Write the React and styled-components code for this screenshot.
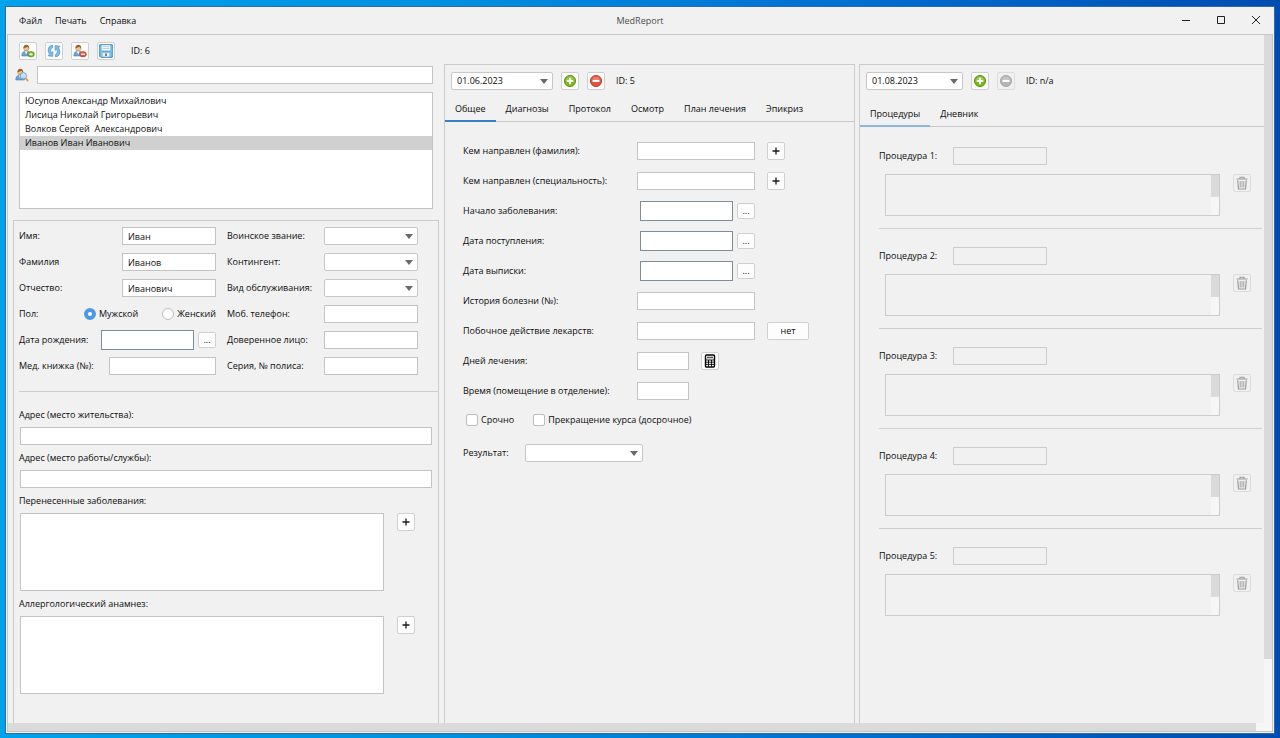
import React, { useId, useState } from 'react';
import styled, { createGlobalStyle } from 'styled-components';

const GlobalStyle = createGlobalStyle`
  * {
    box-sizing: border-box;
  }
  body {
    margin: 0;
    background-color: #0078d7;
  }
  body, input, button, select, textarea {
    font-family: 'Open Sans', 'Noto Sans', sans-serif;
    font-size: 9px;
    line-height: 14px;
    color: #0c0c0c;
  }
`

const Desktop = styled.div`
  min-height: 100vh;
  padding: 6px 5px 4px;
  display: flex;
  background: linear-gradient(90deg, #00a2ec 0%, #0090e0 35%, #0070d4 65%, #004cb0 100%);
`

const Window = styled.div`
  flex: 1;
  min-width: 0;
  display: flex;
  flex-direction: column;
  padding: 0 1px 1px;
  border: 1px solid #2d6c9c;
  background-color: #f1f1f1;
`

const TitleBar = styled.header`
  height: 27px;
  display: grid;
  grid-template-columns: 1fr auto 1fr;
  align-items: center;
`

const Menu = styled.nav`
  display: flex;
  gap: 13px;
  padding-left: 12px;
`

const MenuItem = styled.button`
  padding: 0;
  border: none;
  background: none;
`

const Title = styled.h1`
  margin: 0;
  font-size: 9px;
  font-weight: 400;
  color: #4c4c4c;
`

const WindowControls = styled.div`
  display: flex;
  justify-content: flex-end;
  gap: 23px;
  padding-right: 11px;
`

const WindowControl = styled.button`
  width: 12px;
  height: 12px;
  padding: 0;
  border: none;
  background: none;
  display: flex;
  align-items: center;
  justify-content: center;
`

const Frame = styled.div`
  flex: 1;
  display: grid;
  grid-template-columns: 1fr 8px;
  grid-template-rows: 1fr 8px;
  border: 1px solid #c6c6c6;
`

const Columns = styled.main`
  display: grid;
  grid-template-columns: 432fr 411fr 405fr;
  gap: 4px;
`

const ScrollTrack = styled.div`
  display: flex;
  flex-direction: ${props => props.$horizontal ? 'row' : 'column'};
  background-color: #f6f6f6;
`

const ScrollThumb = styled.div`
  flex-basis: ${props => props.$size};
  background-color: #dadada;
`

const PatientColumn = styled.section`
  min-width: 0;
  display: flex;
  flex-direction: column;
  padding: 7px 1px 0 5px;
`

const PatientTools = styled.div`
  display: flex;
  align-items: center;
  gap: 8px;
  padding-left: 6px;
`

const IdText = styled.span`
  padding-left: ${props => props.$wide ? '8px' : '3px'};
`

const SearchRow = styled.div`
  display: flex;
  align-items: center;
  gap: 8px;
  padding: 6px 6px 8px 2px;
  svg {
    flex: none;
  }
`

const IconButton = styled.button`
  flex: none;
  width: ${props => props.$wide ? '42px' : '18px'};
  height: 18px;
  padding: 0;
  display: flex;
  align-items: center;
  justify-content: center;
  border: 1px solid ${props => props.disabled ? '#dcdcdc' : '#d0d0d0'};
  border-radius: 2px;
  background-color: ${props => props.disabled ? '#f1f1f1' : '#fdfdfd'};
`

const TextInput = styled.input`
  width: ${props => props.$width || '100%'};
  height: ${props => props.$date ? '20px' : '18px'};
  padding: 0 5px;
  border: 1px solid ${props => props.$date ? '#7f8c99' : '#c4c4c4'};
  border-radius: 0;
  background-color: white;
  &:disabled {
    background-color: #f1f1f1;
    border-color: #cccccc;
  }
`

const PatientList = styled.ul`
  height: 117px;
  margin: 0 6px 11px;
  padding: 1px 0;
  list-style: none;
  border: 1px solid #c4c4c4;
  background-color: white;
`

const PatientItem = styled.li`
  height: 14px;
  padding-left: 5px;
  white-space: pre;
  background-color: ${props => props.$selected ? '#d0d0d0' : 'white'};
`

const PatientCard = styled.div`
  flex: 1;
  padding-top: 6px;
  border: 1px solid #cbcbcb;
  border-bottom: none;
`

const PatientGrid = styled.div`
  display: grid;
  grid-template-columns: 197fr 191fr;
  grid-auto-rows: 18px;
  gap: 8px 11px;
  padding: 0 20px 16px 5px;
`

const FieldRow = styled.div`
  min-width: 0;
  display: flex;
  align-items: center;
  justify-content: space-between;
  white-space: nowrap;
`

const DateGroup = styled.div`
  display: flex;
  align-items: center;
  justify-content: flex-end;
  gap: 4px;
`

const MoreButton = styled(IconButton)`
  height: 16px;
`

const RadioGroup = styled.div`
  display: flex;
  gap: 24px;
`

const Choice = styled.label`
  display: flex;
  align-items: center;
  gap: 3px;
`

const Radio = styled.input`
  appearance: none;
  width: 12px;
  height: 12px;
  margin: 0;
  border: 1px solid #bdbdbd;
  border-radius: 50%;
  background-color: white;
  &:checked {
    border: 4px solid #4c9be2;
  }
`

const CheckBox = styled.input`
  appearance: none;
  width: 12px;
  height: 12px;
  margin: 0;
  border: 1px solid #bdbdbd;
  border-radius: 2px;
  background-color: white;
  &:checked {
    background-color: #4c9be2;
  }
`

const SelectBox = styled.div`
  flex: none;
  display: grid;
  align-items: center;
  width: ${props => props.$width};
  &::after {
    content: '';
    grid-area: 1 / 1;
    justify-self: end;
    margin-right: 5px;
    border: 4px solid transparent;
    border-top: 5px solid #6a6a6a;
    border-bottom: none;
    pointer-events: none;
  }
`

const NativeSelect = styled.select`
  appearance: none;
  grid-area: 1 / 1;
  width: 100%;
  height: 18px;
  padding: 0 5px;
  border: 1px solid #c8c8c8;
  border-radius: 2px;
  background-color: white;
`

const Divider = styled.hr`
  width: 100%;
  height: 1px;
  margin: 0;
  border: none;
  background-color: #cfcfcf;
`

const PatientDivider = styled.div`
  padding-left: 5px;
`

const PatientNotes = styled.div`
  display: flex;
  flex-direction: column;
  gap: 6px;
  padding: 16px 6px 0 5px;
`

const NoteBlock = styled.div`
  display: flex;
  flex-direction: column;
  gap: 5px;
`

const NoteBody = styled.div`
  display: flex;
  align-items: flex-start;
  gap: 13px;
  padding: ${props => props.$withButton ? '0 17px 0 1px' : '0 0 0 1px'};
`

const NoteArea = styled.textarea`
  flex: 1;
  min-width: 0;
  height: 78px;
  padding: 2px 5px;
  resize: none;
  border: 1px solid #c4c4c4;
  background-color: white;
`

const Panel = styled.section`
  min-width: 0;
  margin-top: 29px;
  border: 1px solid #cbcbcb;
  border-width: ${props => props.$open ? '1px 0 0 1px' : '1px 1px 0'};
`

const PanelTools = styled.div`
  display: flex;
  align-items: center;
  gap: 8px;
  padding: 7px 6px 0;
`

const TabList = styled.div`
  display: flex;
  margin-top: ${props => props.$spacing};
  box-shadow: inset 0 -1px #c8c8c8;
`

const Tab = styled.button`
  height: 24px;
  padding: 0 10px;
  border: none;
  border-bottom: 2px solid ${props => props.$active ? props.$accent : 'transparent'};
  background: none;
  white-space: nowrap;
`

const VisitForm = styled.form`
  padding: 14px 18px;
`

const VisitRow = styled.div`
  height: 30px;
  display: grid;
  grid-template-columns: 174px 118px auto;
  align-items: center;
  justify-content: start;
  white-space: nowrap;
`

const VisitAction = styled.div`
  display: flex;
  padding-left: 12px;
`

const ShortControl = styled.div`
  display: flex;
  gap: 12px;
`

const CheckRow = styled.div`
  height: 28px;
  display: flex;
  align-items: center;
  gap: 19px;
  padding-left: 3px;
`

const ResultRow = styled.div`
  height: 38px;
  display: flex;
  align-items: center;
  gap: 16px;
`

const Procedures = styled.div`
  padding: 2px 2px 0 19px;
`

const Procedure = styled.div`
  padding: 18px 0 12px;
`

const ProcedureHead = styled.div`
  display: grid;
  grid-template-columns: 74px 94px;
  align-items: center;
  margin-bottom: 9px;
`

const ProcedureBody = styled.div`
  display: flex;
  align-items: flex-start;
  gap: 13px;
  padding: 0 11px 0 6px;
`

const ProcedureNote = styled.div`
  flex: 1;
  height: 42px;
  display: flex;
  border: 1px solid #cccccc;
`

const ProcedureArea = styled.textarea`
  flex: 1;
  min-width: 0;
  padding: 2px 5px;
  resize: none;
  border: none;
  background-color: #f1f1f1;
`

const ProcedureTrack = styled(ScrollTrack)`
  width: 8px;
`

const Person = () => (
  <>
    <path d="M.8 12c0-2.800 1-4.300 2.800-4.800h3c1.800.5 2.800 2 2.800 4.800z" fill="#6aa5dc" stroke="#3a74ac" strokeWidth=".5" />
    <path d="M3.800 7.200h2.800l-1.400 3.300z" fill="#fff" />
    <circle cx="5.300" cy="4.300" r="2.600" fill="#f2c08a" stroke="#b07838" strokeWidth=".5" />
    <path d="M2.500 4.300c-.4-4.600 6.100-4.600 5.700 0-.9-.3-1.400-.9-1.700-1.500-1 .8-2.500.9-4 1.500z" fill="#97602c" />
  </>
)

const AddUserIcon = () => (
  <svg width="14" height="14" viewBox="0 0 14 14">
    <Person />
    <ellipse cx="10" cy="10.200" rx="3.400" ry="2.700" fill="#76b832" stroke="#4c8a1a" strokeWidth=".6" />
    <path d="M8.200 10.200h3.600M10 8.900v2.600" stroke="#fff" strokeWidth="1.100" />
  </svg>
)

const RemoveUserIcon = () => (
  <svg width="14" height="14" viewBox="0 0 14 14">
    <Person />
    <ellipse cx="10" cy="10.200" rx="3.400" ry="2.700" fill="#e4543f" stroke="#b83c2c" strokeWidth=".6" />
    <path d="M8 10.200h4" stroke="#fff" strokeWidth="1.300" />
  </svg>
)

const SearchUserIcon = () => (
  <svg width="14" height="14" viewBox="0 0 14 14">
    <Person />
    <path d="m10.700 10.500 2.500 2.500" stroke="#e2a23c" strokeWidth="1.800" />
    <circle cx="8.300" cy="7.800" r="3.200" fill="#c4e2f8" fillOpacity=".9" stroke="#7f9fbc" strokeWidth="1" />
  </svg>
)

const RefreshIcon = () => (
  <svg width="14" height="14" viewBox="0 0 14 14" fill="#7fbdea" stroke="#3d86c2" strokeWidth=".6" strokeLinejoin="round">
    <path d="M5.600 1.300C2.300 1.300.9 4 1.200 6.800c.1 1.400.6 2.500 1.300 3.400L1 11.800l4.800.6.1-4.800-1.500 1.200C3.200 7 3.400 4.400 5.600 3.600z" />
    <path d="M8.400 12.700c3.300 0 4.700-2.700 4.400-5.500-.1-1.400-.6-2.500-1.300-3.400L13 2.200l-4.800-.6-.1 4.800 1.500-1.200c1.200 1.800 1 4.400-1.200 5.200z" />
  </svg>
)

const SaveIcon = () => (
  <svg width="14" height="14" viewBox="0 0 14 14">
    <path d="M.7.7h12.600v12.600H1.700l-1-1z" fill="#7cc4f0" stroke="#2f80b8" strokeWidth=".9" />
    <path d="M2.800 1.200h8.400v5.600H2.800z" fill="#fbfdff" />
    <path d="M3.600 2.700h6.800M3.600 4.600h6.800" stroke="#9cb4c4" strokeWidth=".7" />
    <path d="M2.800 7.200h8.400" stroke="#3c8ec6" strokeWidth=".8" />
    <path d="M3.500 8.700h7v4.100h-7z" fill="#f0f4f6" stroke="#8fb0c6" strokeWidth=".4" />
    <path d="M6.300 9.500h1.400v2.500H6.300z" fill="#3a4a58" />
  </svg>
)

const RoundIcon = ({ fill, edge, plus }) => (
  <svg width="14" height="14" viewBox="0 0 14 14">
    <circle cx="7" cy="7" r="5.600" fill={fill} stroke={edge} strokeWidth=".9" />
    <path d="M3 5.800C4 1.700 10 1.700 11 5.800 9 6.800 5 6.800 3 5.800z" fill="#fff" opacity=".25" />
    <path d={plus ? 'M3.700 7h6.600M7 3.700v6.600' : 'M3.500 7h7'} stroke="#fff" strokeWidth="2" />
  </svg>
)

const PlusIcon = () => (
  <svg width="10" height="10" viewBox="0 0 10 10" stroke="#1a1a1a" strokeWidth="1.300">
    <path d="M1.500 5h7M5 1.500v7" />
  </svg>
)

const CalculatorIcon = () => (
  <svg width="12" height="14" viewBox="0 0 12 14">
    <rect x="1.500" y="1" width="9" height="12" rx="1" fill="#fff" stroke="#000" strokeWidth="1.400" />
    <path d="M3 3.500h6" stroke="#555" strokeWidth="1.600" />
    <path d="M2 6h8M2 8.200h8M2 10.400h8M4.500 6v6.500M7.500 6v6.500" stroke="#000" strokeWidth=".9" />
  </svg>
)

const TrashIcon = () => (
  <svg width="14" height="14" viewBox="0 0 14 14" fill="none" stroke="#9c9c9c">
    <path d="M1.500 3h11M5 2.700V1.300h4v1.400" strokeWidth="1.100" />
    <path d="M2.700 4.200 3.500 13h7l.8-8.800" strokeWidth="1.200" />
    <path d="M5.200 5v6.500M7 5v6.500M8.800 5v6.500" strokeWidth=".9" />
  </svg>
)

const Select = ({ id, width, options = [''], label }) => (
  <SelectBox $width={width}>
    <NativeSelect id={id} aria-label={label}>
      {options.map(option => <option key={option}>{option}</option>)}
    </NativeSelect>
  </SelectBox>
)

const DateField = ({ id }) => (
  <DateGroup>
    <TextInput id={id} $date $width="93px" />
    <MoreButton type="button" aria-label="Выбрать дату">...</MoreButton>
  </DateGroup>
)

const PatientField = ({ label, type, width = '94px', value }) => {
  const id = useId()
  return (
    <FieldRow>
      <label htmlFor={id}>{label}</label>
      {type === 'select' && <Select id={id} width={width} />}
      {type === 'date' && <DateField id={id} />}
      {!type && <TextInput id={id} $width={width} defaultValue={value} />}
    </FieldRow>
  )
}

const Note = ({ label, multiline }) => {
  const id = useId()
  return (
    <NoteBlock>
      <label htmlFor={id}>{label}</label>
      <NoteBody $withButton={multiline}>
        {multiline ? <NoteArea id={id} /> : <TextInput id={id} />}
        {multiline && <IconButton aria-label="Добавить"><PlusIcon /></IconButton>}
      </NoteBody>
    </NoteBlock>
  )
}

const VisitField = ({ label, type, action }) => {
  const id = useId()
  return (
    <VisitRow>
      <label htmlFor={id}>{label}</label>
      {type === 'date' && <DateField id={id} />}
      {type === 'short' && (
        <ShortControl>
          <TextInput id={id} $width="52px" />
          {action}
        </ShortControl>
      )}
      {!type && <TextInput id={id} />}
      {!type && action && <VisitAction>{action}</VisitAction>}
    </VisitRow>
  )
}

const ProcedureItem = ({ number }) => {
  const id = useId()
  return (
    <Procedure>
      <ProcedureHead>
        <label htmlFor={id}>Процедура {number}:</label>
        <TextInput id={id} disabled />
      </ProcedureHead>
      <ProcedureBody>
        <ProcedureNote>
          <ProcedureArea disabled aria-label={`Описание процедуры ${number}`} />
          <ProcedureTrack><ScrollThumb $size="22px" /></ProcedureTrack>
        </ProcedureNote>
        <IconButton disabled aria-label="Удалить"><TrashIcon /></IconButton>
      </ProcedureBody>
    </Procedure>
  )
}

const Tabs = ({ names, accent, spacing }) => {
  const [active, setActive] = useState(names[0])
  return (
    <TabList role="tablist" $spacing={spacing}>
      {names.map(name => (
        <Tab
          key={name}
          role="tab"
          aria-selected={name === active}
          $active={name === active}
          $accent={accent}
          onClick={() => setActive(name)}
        >
          {name}
        </Tab>
      ))}
    </TabList>
  )
}

const patients = [
  'Юсупов Александр Михайлович',
  'Лисица Николай Григорьевич',
  'Волков Сергей  Александрович',
  'Иванов Иван Иванович',
]

const visitTabs = ['Общее', 'Диагнозы', 'Протокол', 'Осмотр', 'План лечения', 'Эпикриз']

function App() {
  const [selected, setSelected] = useState(3)
  const addButton = <IconButton type="button" aria-label="Добавить"><PlusIcon /></IconButton>

  return (
    <Desktop>
      <GlobalStyle />
      <Window>
        <TitleBar>
          <Menu>
            <MenuItem>Файл</MenuItem>
            <MenuItem>Печать</MenuItem>
            <MenuItem>Справка</MenuItem>
          </Menu>
          <Title>MedReport</Title>
          <WindowControls>
            <WindowControl aria-label="Свернуть">
              <svg width="10" height="10" stroke="#222"><path d="M1 4.500h8" /></svg>
            </WindowControl>
            <WindowControl aria-label="Развернуть">
              <svg width="10" height="10" stroke="#222" fill="none"><path d="M1.500.5h7v7h-7z" /></svg>
            </WindowControl>
            <WindowControl aria-label="Закрыть">
              <svg width="10" height="10" stroke="#222"><path d="m1 0 8 8M9 0 1 8" /></svg>
            </WindowControl>
          </WindowControls>
        </TitleBar>
        <Frame>
          <Columns>
            <PatientColumn>
              <PatientTools>
                <IconButton aria-label="Добавить пациента"><AddUserIcon /></IconButton>
                <IconButton aria-label="Обновить"><RefreshIcon /></IconButton>
                <IconButton aria-label="Удалить пациента"><RemoveUserIcon /></IconButton>
                <IconButton aria-label="Сохранить"><SaveIcon /></IconButton>
                <IdText $wide>ID: 6</IdText>
              </PatientTools>
              <SearchRow>
                <SearchUserIcon />
                <TextInput aria-label="Поиск" />
              </SearchRow>
              <PatientList>
                {patients.map((name, index) => (
                  <PatientItem
                    key={name}
                    $selected={index === selected}
                    onClick={() => setSelected(index)}
                  >
                    {name}
                  </PatientItem>
                ))}
              </PatientList>
              <PatientCard>
                <PatientGrid>
                  <PatientField label="Имя:" value="Иван" />
                  <PatientField label="Воинское звание:" type="select" />
                  <PatientField label="Фамилия" value="Иванов" />
                  <PatientField label="Контингент:" type="select" />
                  <PatientField label="Отчество:" value="Иванович" />
                  <PatientField label="Вид обслуживания:" type="select" />
                  <FieldRow>
                    <span>Пол:</span>
                    <RadioGroup>
                      <Choice><Radio type="radio" name="sex" defaultChecked />Мужской</Choice>
                      <Choice><Radio type="radio" name="sex" />Женский</Choice>
                    </RadioGroup>
                  </FieldRow>
                  <PatientField label="Моб. телефон:" />
                  <PatientField label="Дата рождения:" type="date" />
                  <PatientField label="Доверенное лицо:" />
                  <PatientField label="Мед. книжка (№):" width="107px" />
                  <PatientField label="Серия, № полиса:" />
                </PatientGrid>
                <PatientDivider><Divider /></PatientDivider>
                <PatientNotes>
                  <Note label="Адрес (место жительства):" />
                  <Note label="Адрес (место работы/службы):" />
                  <Note label="Перенесенные заболевания:" multiline />
                  <Note label="Аллергологический анамнез:" multiline />
                </PatientNotes>
              </PatientCard>
            </PatientColumn>

            <Panel>
              <PanelTools>
                <Select width="102px" options={['01.06.2023']} label="Дата обращения" />
                <IconButton aria-label="Добавить обращение"><RoundIcon fill="#7cb81c" edge="#5a9010" plus /></IconButton>
                <IconButton aria-label="Удалить обращение"><RoundIcon fill="#e4523c" edge="#b83c2c" /></IconButton>
                <IdText>ID: 5</IdText>
              </PanelTools>
              <Tabs names={visitTabs} accent="#3d7fc4" spacing="8px" />
              <VisitForm>
                <VisitField label="Кем направлен (фамилия):" action={addButton} />
                <VisitField label="Кем направлен (специальность):" action={addButton} />
                <VisitField label="Начало заболевания:" type="date" />
                <VisitField label="Дата поступления:" type="date" />
                <VisitField label="Дата выписки:" type="date" />
                <VisitField label="История болезни (№):" />
                <VisitField
                  label="Побочное действие лекарств:"
                  action={<IconButton type="button" $wide>нет</IconButton>}
                />
                <VisitField
                  label="Дней лечения:"
                  type="short"
                  action={<IconButton type="button" aria-label="Рассчитать"><CalculatorIcon /></IconButton>}
                />
                <VisitField label="Время (помещение в отделение):" type="short" />
                <CheckRow>
                  <Choice><CheckBox type="checkbox" />Срочно</Choice>
                  <Choice><CheckBox type="checkbox" />Прекращение курса (досрочное)</Choice>
                </CheckRow>
                <ResultRow>
                  <label htmlFor="result">Результат:</label>
                  <Select id="result" width="118px" />
                </ResultRow>
              </VisitForm>
            </Panel>

            <Panel $open>
              <PanelTools>
                <Select width="97px" options={['01.08.2023']} label="Дата процедур" />
                <IconButton aria-label="Добавить день"><RoundIcon fill="#7cb81c" edge="#5a9010" plus /></IconButton>
                <IconButton disabled aria-label="Удалить день"><RoundIcon fill="#b4b4b4" edge="#a6a6a6" /></IconButton>
                <IdText>ID: n/a</IdText>
              </PanelTools>
              <Tabs names={['Процедуры', 'Дневник']} accent="#8fb5da" spacing="13px" />
              <Procedures>
                {[1, 2, 3, 4, 5].map(number => (
                  <React.Fragment key={number}>
                    {number > 1 && <Divider />}
                    <ProcedureItem number={number} />
                  </React.Fragment>
                ))}
              </Procedures>
            </Panel>
          </Columns>
          <ScrollTrack><ScrollThumb $size="calc(100% - 64px)" /></ScrollTrack>
          <ScrollTrack $horizontal><ScrollThumb $size="calc(100% - 8px)" /></ScrollTrack>
          <ScrollTrack />
        </Frame>
      </Window>
    </Desktop>
  );
}

export default App;
